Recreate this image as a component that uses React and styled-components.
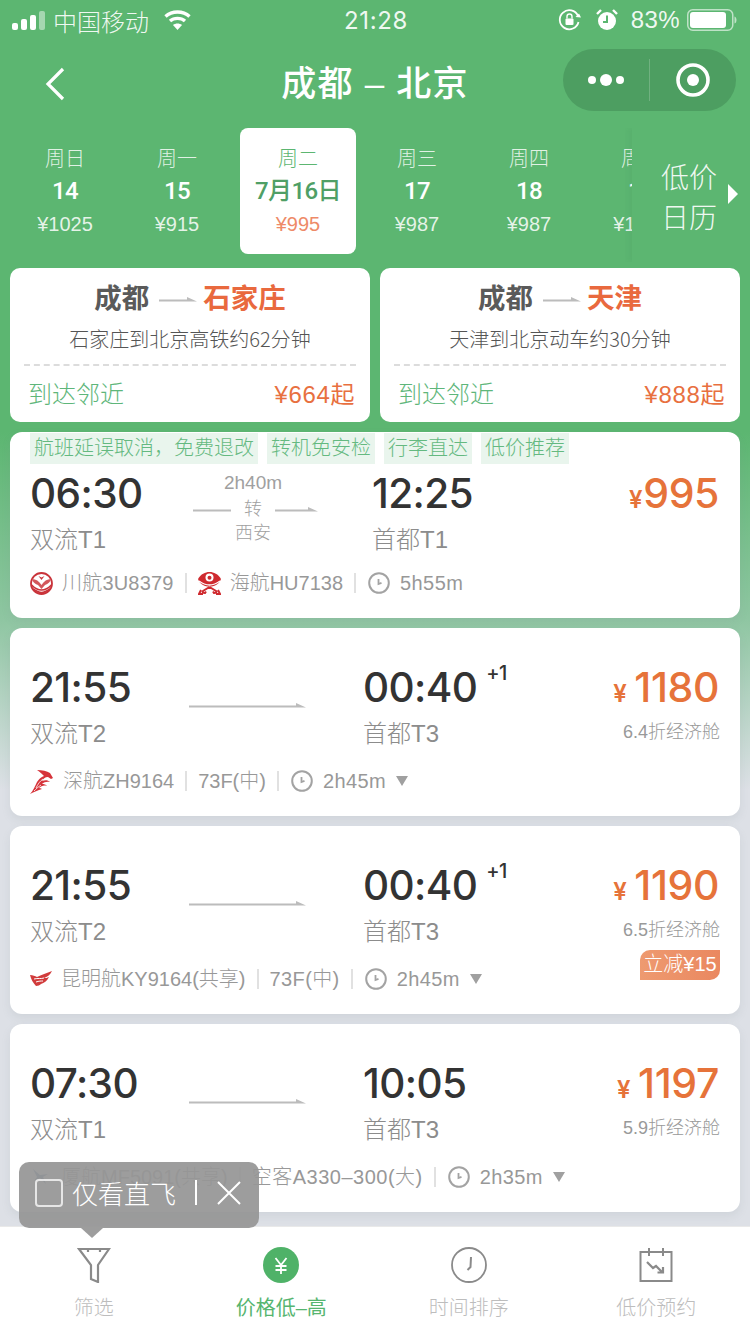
import React from 'react';
import styled, { createGlobalStyle } from 'styled-components';

const Global = createGlobalStyle`
  html, body { margin: 0; padding: 0; background: #dde0e6; }
  * { box-sizing: border-box; }
  body { font-family: "Liberation Sans", "Noto Sans CJK SC", sans-serif; -webkit-font-smoothing: antialiased; }
`;

const Page = styled.div`
  position: relative; width: 750px; height: 1334px; overflow: hidden;
  background: linear-gradient(180deg, #5cb671 0, #5cb671 432px, #8fc6a2 620px, #dde0e6 790px, #dde0e6 100%);
`;
const StatusBar = styled.div`
  height: 40px; display: grid; grid-template-columns: 1fr auto 1fr; align-items: center;
  padding: 0 13px 0 12px; color: rgba(255,255,255,.92); font-size: 24px; font-weight: 300;
`;
const StatusSide = styled.div`
  display: flex; align-items: center; gap: ${p => p.$gap || 7}px; justify-content: ${p => p.$end ? 'flex-end' : 'flex-start'};
`;
const Clock = styled.div` font-family: "Inter", sans-serif; font-size: 24px; font-weight: 400; letter-spacing: .6px; padding-left: 3px; `;
const Pct = styled.span` font-family: "Liberation Sans", sans-serif; font-size: 24px; letter-spacing: .4px; `;
const Nav = styled.div`
  position: relative; height: 88px; display: flex; align-items: center; justify-content: center;
`;
const Title = styled.h1`
  margin: 0; color: #fff; font-size: 35px; font-weight: 500; letter-spacing: 1.2px; line-height: 88px;
`;
const BackBtn = styled.div` position: absolute; left: 44px; top: 27px; line-height: 0; `;
const Capsule = styled.div`
  position: absolute; left: 563px; top: 9px; width: 173px; height: 62px; border-radius: 31px;
  background: #4d9e61; display: flex; align-items: center;
`;
const CapsulePart = styled.div`
  width: 86px; display: flex; align-items: center; justify-content: center;
  border-left: ${p => p.$line ? '1px solid rgba(255,255,255,.2)' : 'none'};
  height: ${p => p.$line ? '42px' : '100%'};
`;
const DateStrip = styled.div`
  position: relative; height: 134px; display: flex; padding-left: 9px; overflow: hidden;
`;
const DateItem = styled.div`
  flex: 0 0 ${p => p.$on ? '116px' : '112px'}; height: 126px; margin: ${p => p.$on ? '0 5px 0 7px' : 0};
  background: ${p => p.$on ? '#fff' : 'transparent'}; border-radius: ${p => p.$on ? '8px' : 0};
  display: flex; flex-direction: column; align-items: center; padding-top: 17px;
`;
const Week = styled.div`
  font-size: 20px; line-height: 28px; font-weight: 300; color: ${p => p.$on ? '#5cb671' : 'rgba(255,255,255,.82)'};
`;
const DayNum = styled.div`
  font-size: 24px; line-height: 36px; font-weight: 500; letter-spacing: -.6px; color: ${p => p.$on ? '#4f9f66' : '#fff'};
  font-family: "Roboto", "Noto Sans CJK SC", sans-serif; white-space: nowrap;
`;
const DatePrice = styled.div`
  font-size: 20px; line-height: 30px; font-weight: 300; color: ${p => p.$on ? '#ee8a68' : 'rgba(255,255,255,.85)'};
`;
const CalPanel = styled.div`
  position: absolute; right: 0; top: 0; width: 118px; height: 134px; background: #5cb671;
  box-shadow: -3px 0 5px rgba(60,120,80,.09); color: rgba(255,255,255,.92);
  display: flex; flex-direction: column; padding: 31px 0 0 29px; font-size: 28px; font-weight: 300; line-height: 40px;
`;
const CalArrow = styled.div`
  position: absolute; left: 96px; top: 56px; width: 0; height: 0; border-style: solid;
  border-width: 10px 0 10px 10px; border-color: transparent transparent transparent #fff;
`;
const PromoRow = styled.div` display: flex; gap: 10px; padding: 6px 10px 0; `;
const Promo = styled.div`
  flex: 1; height: 154px; background: #fff; border-radius: 10px; padding: 13px 14px 0;
`;
const PromoTitle = styled.div`
  display: flex; align-items: center; justify-content: center; gap: 10px; height: 36px;
  font-size: 27.5px; font-weight: 700; line-height: 36px;
`;
const City = styled.span` color: ${p => p.$hot ? '#e9693e' : '#5a5a5a'}; margin-left: ${p => p.$hot ? '-4px' : 0}; `;
const PromoSub = styled.div`
  margin-top: 7px; text-align: center; font-family: "Noto Sans CJK SC", sans-serif; font-size: 20px; line-height: 30px;
  font-weight: 300; color: #555; height: 30px;
`;
const PromoFoot = styled.div`
  margin-top: 10px; border-top: 2px dashed #dcdcdc; display: flex; justify-content: space-between; align-items: center;
  height: 54px; padding: 0 1px 0 4px; font-size: 24px; font-weight: 300;
`;
const Near = styled.span` color: #5eb67a; `;
const FromPrice = styled.span` color: #e8703f; font-weight: 400; letter-spacing: .6px; `;
const List = styled.div` display: flex; flex-direction: column; gap: 10px; padding: 10px 10px 0; `;
const Card = styled.div`
  background: #fff; border-radius: 12px; height: ${p => p.$h}px; padding: ${p => p.$top}px 20px 0; display: flex;
  box-shadow: 0 4px 8px rgba(130,140,150,.14);
`;
const CardLeft = styled.div` flex: 1; min-width: 0; `;
const Tags = styled.div` display: flex; gap: 9px; margin-bottom: 4px; height: 31px; `;
const Tag = styled.span`
  background: #e9f5ed; color: #64b980; font-size: 20px; line-height: 31px; padding: 0 4px; font-weight: 300;
  white-space: nowrap; height: 31px;
`;
const Main = styled.div` display: grid; grid-template-columns: ${p => p.$cols}; align-items: start; `;
const Time = styled.div`
  font-family: "Inter", sans-serif; font-size: 40.500px; line-height: 50px; font-weight: 500; color: #333;
  letter-spacing: -.6px; display: flex; padding-top: 1px;
`;
const Plus = styled.span`
  font-size: 20px; line-height: 20px; font-weight: 500; margin: 0 0 0 9px;
`;
const Airport = styled.div`
  margin-top: 6px; font-size: 24px; line-height: 30px; font-weight: 300; color: #8c8c8c;
`;
const Route = styled.div` display: flex; flex-direction: column; align-items: flex-start; `;
const Straight = styled.div` padding-top: 39px; line-height: 0; `;
const Via = styled.div`
  display: flex; flex-direction: column; align-items: center; width: 120px; color: #a0a0a0; font-size: 18px; line-height: 26px;
  font-weight: 300; margin-top: 2px;
`;
const ViaDur = styled.span` font-size: 19px; `;
const ViaStop = styled.span` margin-top: -2px; `;
const ViaMid = styled.div` display: flex; align-items: center; gap: 13px; width: 125px; margin-right: -5px; `;
const Meta = styled.div`
  margin-top: ${p => p.$mt}px; height: 30px; display: flex; align-items: center; color: #989898; font-size: 20px; font-weight: 300;
  white-space: nowrap;
`;
const Logo = styled.span` display: inline-flex; margin-right: 9px; line-height: 0; `;
const MetaText = styled.span` letter-spacing: ${p => p.$sp || 0}px; padding-bottom: 3px; `;
const Duration = styled.span` letter-spacing: .4px; `;
const Sep = styled.span` width: 2px; height: 20px; background: #e1e1e1; margin: 0 11px 0 11px; `;
const ClockIcon = styled.span` display: inline-flex; margin: 0 10px 0 1px; line-height: 0; `;
const Caret = styled.span`
  width: 0; height: 0; margin-left: 10px; border-style: solid; border-width: 10px 6.5px 0 6.5px;
  border-color: #a0a0a0 transparent transparent transparent;
`;
const PriceCol = styled.div`
  display: flex; flex-direction: column; align-items: flex-end; flex: none; margin-top: ${p => p.$mt}px;
`;
const PriceLine = styled.div`
  display: flex; align-items: baseline; height: 50px; line-height: 50px; color: #e6733a; font-family: "Inter", sans-serif;
  font-size: 41px; font-weight: 500; letter-spacing: -.4px; padding-right: 1px;
`;
const Yen = styled.span` font-size: 24px; font-weight: 600; margin-right: ${p => p.$gap}px; `;
const Discount = styled.div` margin-top: 7px; font-size: 18px; line-height: 26px; color: #999; font-weight: 300; `;
const Rebate = styled.div`
  margin-top: 7px; width: 80px; height: 30px; background: linear-gradient(90deg, #ee9a70, #ea8860); color: #fff;
  border-radius: 10px 0 10px 0; font-size: 20px; line-height: 28px; font-weight: 300; text-align: center; white-space: nowrap;
`;
const TabBar = styled.div`
  position: absolute; left: 0; right: 0; bottom: 0; height: 108px; background: #fff; border-top: 1px solid #e9e9e9;
  display: grid; grid-template-columns: repeat(4, 1fr); z-index: 1;
`;
const TabItem = styled.div`
  display: flex; flex-direction: column; align-items: center; padding-top: 17px;
  color: ${p => p.$on ? '#56b56f' : '#bdbdbd'}; font-size: 20px; font-weight: ${p => p.$on ? 400 : 300};
`;
const TabIcon = styled.div` height: 42px; line-height: 0; margin-bottom: 6px; display: flex; align-items: center; `;
const Tip = styled.div`
  position: absolute; left: 19px; top: 1162px; width: 240px; height: 66px; background: rgba(150,150,150,.93); border-radius: 10px;
  display: flex; align-items: center; padding: 0 0 5px 16px; color: #fff; font-size: 26px; font-weight: 300; z-index: 2;
`;
const TipBox = styled.span`
  width: 28px; height: 28px; border: 2px solid rgba(255,255,255,.75); border-radius: 4px; margin-right: 9px;
`;
const TipBar = styled.span` width: 2px; height: 25px; background: #fff; margin: 0 20px 0 19px; `;
const TipArrow = styled.span`
  position: absolute; left: 62px; top: 66px; width: 0; height: 0; border-style: solid;
  border-width: 10px 11px 0 11px; border-color: rgba(150,150,150,.93) transparent transparent transparent;
`;

const ClockSvg = () => (
  <svg width="22" height="22" viewBox="0 0 22 22" fill="none" stroke="#a3a3a3" strokeWidth="2">
    <circle cx="11" cy="11" r="9.8" />
    <path d="M10.500 7v5l3-1.200" strokeWidth="1.800" />
  </svg>
);
const Sichuan = () => (
  <svg width="23" height="23" viewBox="0 0 23 23">
    <circle cx="11.500" cy="11.500" r="10.500" fill="#fff" stroke="#c9333a" strokeWidth="1.800" />
    <path d="M2 7c4 0 7 2 9.500 6C14 9 17 7 21 7c0 2-3 5-6 6l-3.500 4L8 13C5 12 2 9 2 7z" fill="#d2575b" />
    <path d="M8.500 4l3 4 3-4-3 1.500z" fill="#c9333a" />
    <path d="M1.500 13c4 4 7 5 10 5s6-1 10-5M3 17c3 2 6 3.500 8.500 3.500s5.500-1.500 8.500-3.500" fill="none" stroke="#c9333a" strokeWidth="1.700" />
  </svg>
);
const Hainan = () => (
  <svg width="23" height="23" viewBox="0 0 23 23">
    <path d="M0 7C3 2 7 0 11.500 0S20 2 23 7c-1 3-3 5-5 6-4 2-9 2-13 0-2-1-4-3-5-6z" fill="#cf2a2f" />
    <circle cx="11.500" cy="5.500" r="4" fill="#fff" />
    <circle cx="11.500" cy="5.800" r="2" fill="#cf2a2f" />
    <path d="M1 9c4 3 7 4 10.500 4S18 12 22 9" fill="none" stroke="#fff" strokeWidth="1.300" />
    <path d="M11.500 15L5 19c-1 1 0 2 2 2l1-1.500M11.500 15l6.500 4c1 1 0 2-2 2l-1-1.500M3 18l-2 4h4M20 18l2 4h-4" fill="none" stroke="#cf2a2f" strokeWidth="2" />
  </svg>
);
const Shenzhen = () => (
  <svg width="24" height="26" viewBox="0 0 24 26" fill="#d6333a">
    <path d="M0 26c3-3 5-8 7-12 2-3 4-5 7-6-2-2-4-4-7-6 5 0 10 1 13 3l3 5-2 1-3-2c-3 0-5 2-6 4 3-1 6-1 8 1-3-.5-6 0-8 2 2 0 4 .5 5 2-3-1-6 0-8 2 1 0 2 .5 3 1-4 1-8 3-12 5z" />
    <path d="M6 20c2-4 4-7 7-9M4 23c2-2 4-4 7-6" stroke="#fff" strokeWidth=".8" fill="none" />
  </svg>
);
const Kunming = () => (
  <svg width="22" height="16" viewBox="0 0 22 16">
    <path d="M0 4c3 0 5 1 7 2C11 4 17 2 22 0c-2 4-5 6-8 7 2 0 3 0 5-1-2 4-5 6-8 7-1 1-3 2-5 2C3 12 1 8 0 4z" fill="#d13c3c" />
    <path d="M4 8c4-1 7 0 10-1M6 11c3-1 5-1 7-1" stroke="#fff" strokeWidth="1" fill="none" />
  </svg>
);
const Xiamen = () => (
  <svg width="22" height="18" viewBox="0 0 22 18">
    <path d="M3 1l7 6 8-1-5 3 3 7-6-6-6 3 3-4z" fill="#5d7fa8" />
  </svg>
);
const LineArrow = ({ w }) => (
  <svg width={w} height="8" viewBox={`0 0 ${w} 8`}>
    <path d={`M0 4.500H${w - 10}V2L${w} 6.500H0z`} fill="#bcbcbc" />
  </svg>
);
const LineGap = () => (
  <svg width="38" height="8" viewBox="0 0 38 8"><path d="M0 4.500H38V6.500H0z" fill="#bcbcbc" /></svg>
);

const dates = [
  { w: '周日', d: '14', p: '¥1025' }, { w: '周一', d: '15', p: '¥915' },
  { w: '周二', d: '7月16日', p: '¥995', on: true }, { w: '周三', d: '17', p: '¥987' },
  { w: '周四', d: '18', p: '¥987' }, { w: '周五', d: '19', p: '¥1025' },
];
const flights = [
  { h: 186, top: 1, priceTop: 35, dep: '06:30', arr: '12:25', from: '双流T1', to: '首都T1', price: '995', yenGap: 1, cols: '163px 179px 1fr', tags: ['航班延误取消，免费退改', '转机免安检', '行李直达', '低价推荐'], via: true, mt: 13,
    meta: [{ L: Sichuan, t: '川航3U8379', sp: .2 }, { L: Hainan, t: '海航HU7138' }], dur: '5h55m' },
  { h: 188, top: 34, dep: '21:55', arr: '00:40', plus: true, from: '双流T2', to: '首都T3', price: '1180', yenGap: 8, disc: '6.4折经济舱', cols: '159px 174px 1fr', mt: 17,
    meta: [{ L: Shenzhen, t: '深航ZH9164' }, { t: '73F(中)' }], dur: '2h45m', caret: true },
  { h: 188, top: 34, dep: '21:55', arr: '00:40', plus: true, from: '双流T2', to: '首都T3', price: '1190', yenGap: 8, disc: '6.5折经济舱', rebate: '立减¥15', cols: '159px 174px 1fr', mt: 17,
    meta: [{ L: Kunming, t: '昆明航KY9164(共享)' }, { t: '73F(中)', sp: .4 }], dur: '2h45m', caret: true },
  { h: 188, top: 34, dep: '07:30', arr: '10:05', from: '双流T1', to: '首都T3', price: '1197', yenGap: 8, disc: '5.9折经济舱', cols: '159px 174px 1fr', mt: 17,
    meta: [{ L: Xiamen, t: '厦航MF5091(共享)' }, { t: '空客A330–300(大)', sp: .5 }], dur: '2h35m', caret: true },
];
const promos = [
  { c: '石家庄', s: '石家庄到北京高铁约62分钟', p: '¥664起' },
  { c: '天津', s: '天津到北京动车约30分钟', p: '¥888起' },
];

function Flight({ f }) {
  return (
    <Card $h={f.h} $top={f.top}>
      <CardLeft>
        {f.tags && <Tags>{f.tags.map(t => <Tag key={t}>{t}</Tag>)}</Tags>}
        <Main $cols={f.cols}>
          <div>
            <Time>{f.dep}</Time>
            <Airport>{f.from}</Airport>
          </div>
          <Route>
            {f.via ? (
              <Via>
                <ViaDur>2h40m</ViaDur>
                <ViaMid><LineGap /><span>转</span><LineArrow w={43} /></ViaMid>
                <ViaStop>西安</ViaStop>
              </Via>
            ) : <Straight><LineArrow w={117} /></Straight>}
          </Route>
          <div>
            <Time>{f.arr}{f.plus && <Plus>+1</Plus>}</Time>
            <Airport>{f.to}</Airport>
          </div>
        </Main>
        <Meta $mt={f.mt}>
          {f.meta.map(m => (
            <React.Fragment key={m.t}>
              {m.L && <Logo><m.L /></Logo>}
              <MetaText $sp={m.sp}>{m.t}</MetaText>
              <Sep />
            </React.Fragment>
          ))}
          <ClockIcon><ClockSvg /></ClockIcon>
          <Duration>{f.dur}</Duration>
          {f.caret && <Caret />}
        </Meta>
      </CardLeft>
      <PriceCol $mt={f.priceTop || 0}>
        <PriceLine><Yen $gap={f.yenGap}>¥</Yen>{f.price}</PriceLine>
        {f.disc && <Discount>{f.disc}</Discount>}
        {f.rebate && <Rebate>{f.rebate}</Rebate>}
      </PriceCol>
    </Card>
  );
}

export default function App() {
  return (
    <Page>
      <Global />
      <StatusBar>
        <StatusSide>
          <svg width="34" height="20" viewBox="0 0 34 20">
            <rect x="0" y="13" width="6" height="7" rx="2" fill="#fff" />
            <rect x="9" y="9" width="6" height="11" rx="2" fill="#fff" />
            <rect x="18" y="5" width="6" height="15" rx="2" fill="#fff" />
            <rect x="27" y="1" width="6" height="19" rx="2" fill="rgba(255,255,255,.45)" />
          </svg>
          <span>中国移动</span>
          <svg style={{ marginLeft: 8 }} width="27" height="20" viewBox="0 0 27 20" fill="none" stroke="#fff" strokeWidth="3.400">
            <path d="M1.500 6.500C8 .5 19 .5 25.500 6.500M6 11c4-3.500 11-3.500 15 0" />
            <path d="M13.500 20l-4.500-5c2.500-2 6.500-2 9 0z" fill="#fff" stroke="none" />
          </svg>
        </StatusSide>
        <Clock>21:28</Clock>
        <StatusSide $end $gap={10}>
          <svg width="24" height="24" viewBox="0 0 24 24" fill="none" stroke="#fff" strokeWidth="1.800">
            <path d="M20.500 14A9.500 9.500 0 1 1 20 8" />
            <path d="M17.500 9l5.500.5-2-4" fill="#fff" stroke="none" />
            <rect x="7.500" y="10.500" width="8" height="6.500" rx="1" fill="#fff" stroke="none" />
            <path d="M9 10.500V8.500a2.500 2.500 0 0 1 5 0v2" strokeWidth="1.400" />
          </svg>
          <svg style={{ marginLeft: 4 }} width="22" height="22" viewBox="0 0 22 22" fill="none">
            <circle cx="11" cy="12" r="9" fill="#fff" />
            <path d="M1 5l4-4M21 5l-4-4" stroke="#fff" strokeWidth="2.400" />
            <path d="M11 6.500V13H7" stroke="#5cb671" strokeWidth="2" />
          </svg>
          <Pct style={{ marginLeft: 3 }}>83%</Pct>
          <svg width="50" height="22" viewBox="0 0 50 22" style={{ marginLeft: -3 }}>
            <rect x=".75" y=".75" width="45" height="20.500" rx="5" fill="none" stroke="rgba(255,255,255,.6)" strokeWidth="1.500" />
            <rect x="3" y="3" width="36" height="16" rx="3" fill="#fff" />
            <path d="M47.500 7.500c1.500.5 2 2 2 3.500s-.5 3-2 3.500z" fill="rgba(255,255,255,.6)" />
          </svg>
        </StatusSide>
      </StatusBar>
      <Nav>
        <BackBtn>
          <svg width="22" height="34" viewBox="0 0 22 34" fill="none" stroke="#fff" strokeWidth="3.200">
            <path d="M19 2L4 17l15 15" />
          </svg>
        </BackBtn>
        <Title>成都 – 北京</Title>
        <Capsule>
          <CapsulePart>
            <svg width="38" height="14" viewBox="0 0 38 14" fill="#fff">
              <circle cx="5" cy="7" r="4" />
              <circle cx="19" cy="7" r="6" />
              <circle cx="33" cy="7" r="4" />
            </svg>
          </CapsulePart>
          <CapsulePart $line>
            <svg width="36" height="36" viewBox="0 0 36 36">
              <circle cx="18" cy="18" r="15" fill="none" stroke="#fff" strokeWidth="3.600" />
              <circle cx="18" cy="18" r="6" fill="#fff" />
            </svg>
          </CapsulePart>
        </Capsule>
      </Nav>
      <DateStrip>
        {dates.map(d => (
          <DateItem key={d.w} $on={d.on}>
            <Week $on={d.on}>{d.w}</Week>
            <DayNum $on={d.on}>{d.d}</DayNum>
            <DatePrice $on={d.on}>{d.p}</DatePrice>
          </DateItem>
        ))}
        <CalPanel>
          <span>低价</span>
          <span>日历</span>
          <CalArrow />
        </CalPanel>
      </DateStrip>
      <PromoRow>
        {promos.map(p => (
          <Promo key={p.c}>
            <PromoTitle>
              <City>成都</City>
              <LineArrow w={38} />
              <City $hot>{p.c}</City>
            </PromoTitle>
            <PromoSub>{p.s}</PromoSub>
            <PromoFoot>
              <Near>到达邻近</Near>
              <FromPrice>{p.p}</FromPrice>
            </PromoFoot>
          </Promo>
        ))}
      </PromoRow>
      <List>
        {flights.map((f, i) => <Flight key={i} f={f} />)}
      </List>
      <Tip>
        <TipBox />
        <span>仅看直飞</span>
        <TipBar />
        <svg width="24" height="24" viewBox="0 0 24 24" stroke="#fff" strokeWidth="2" fill="none">
          <path d="M1 1l22 22M23 1L1 23" />
        </svg>
        <TipArrow />
      </Tip>
      <TabBar>
        <TabItem>
          <TabIcon>
            <svg width="34" height="36" viewBox="0 0 34 36" fill="none" stroke="#8a8a8a" strokeWidth="2.200">
              <path d="M2 2h30L21 18v17l-7-3V18z" />
              <path d="M11 2v3M23 2v3" />
            </svg>
          </TabIcon>
          <span>筛选</span>
        </TabItem>
        <TabItem $on>
          <TabIcon>
            <svg width="36" height="36" viewBox="0 0 36 36">
              <circle cx="18" cy="18" r="18" fill="#4fb268" />
              <path d="M12.500 11l5.500 7 5.500-7M18 18v9M12.500 19h11M12.500 23h11" fill="none" stroke="#fff" strokeWidth="1.800" />
            </svg>
          </TabIcon>
          <span>价格低–高</span>
        </TabItem>
        <TabItem>
          <TabIcon>
            <svg width="36" height="36" viewBox="0 0 36 36" fill="none" stroke="#8a8a8a" strokeWidth="1.800">
              <circle cx="18" cy="18" r="17" />
              <path d="M20 10l-.5 10-3 3" strokeWidth="2" />
            </svg>
          </TabIcon>
          <span>时间排序</span>
        </TabItem>
        <TabItem>
          <TabIcon>
            <svg width="34" height="34" viewBox="0 0 34 34" fill="none" stroke="#8a8a8a" strokeWidth="2">
              <rect x="1.500" y="4" width="31" height="29" />
              <path d="M10 0v8M24 0v8" />
              <path d="M8 14l6 6 3-2 6 6M24 19v5.500h-5.500" strokeWidth="2.200" />
            </svg>
          </TabIcon>
          <span>低价预约</span>
        </TabItem>
      </TabBar>
    </Page>
  );
}
